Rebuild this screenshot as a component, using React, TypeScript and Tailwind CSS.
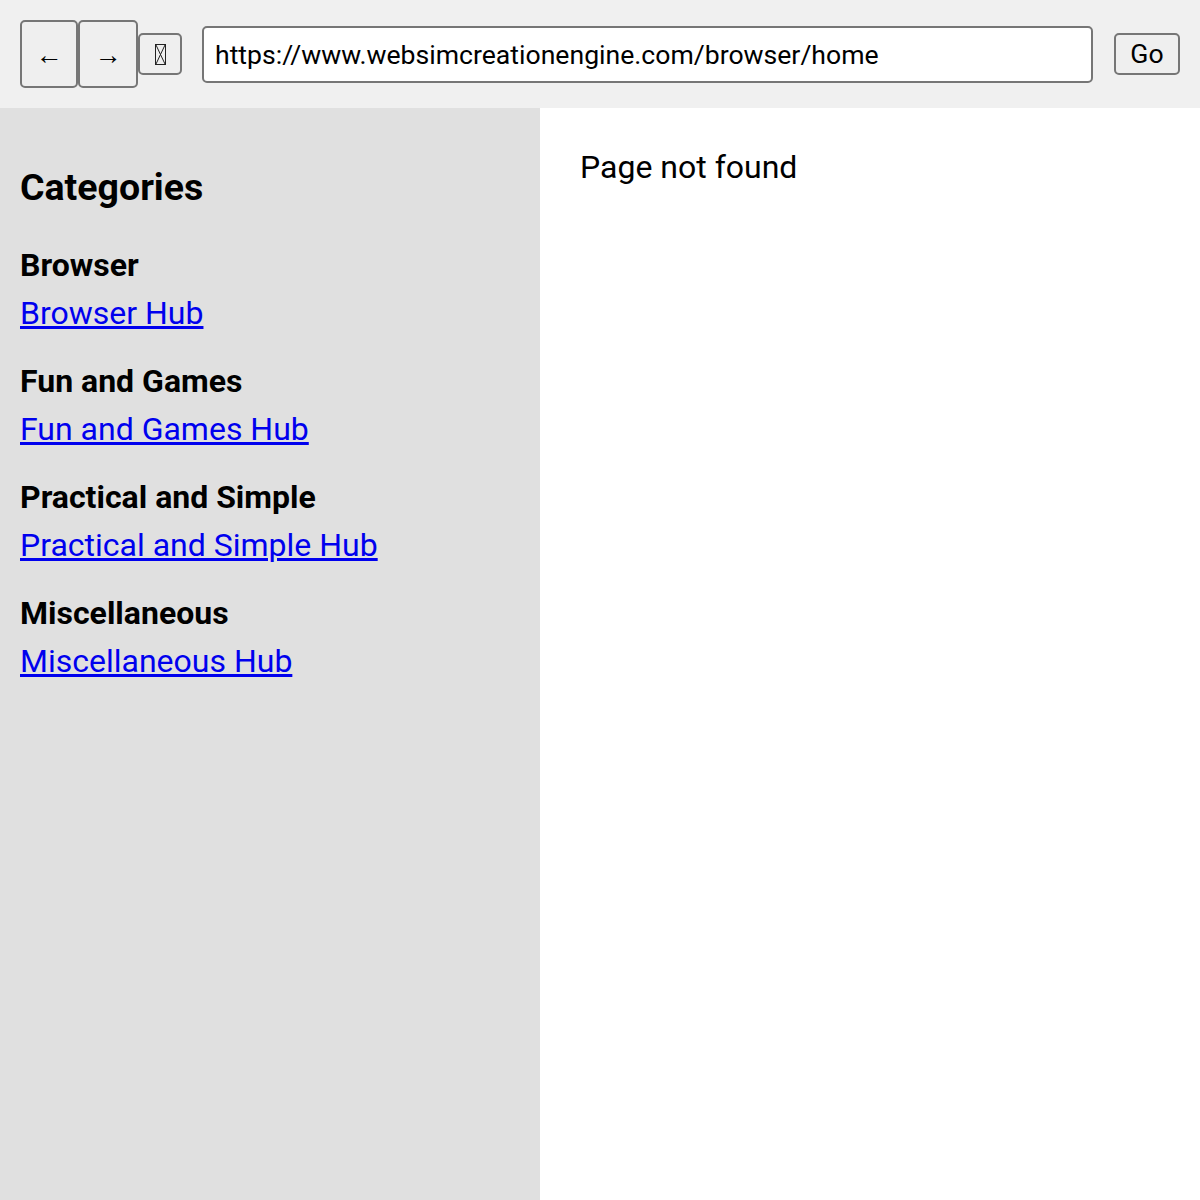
export default function App() {
  const sections = [
    { title: 'Browser', link: 'Browser Hub' },
    { title: 'Fun and Games', link: 'Fun and Games Hub' },
    { title: 'Practical and Simple', link: 'Practical and Simple Hub' },
    { title: 'Miscellaneous', link: 'Miscellaneous Hub' },
  ]

  return (
    <div className="flex h-[1200px] flex-col font-['Roboto',sans-serif] text-black">
      {/* Toolbar */}
      <div className="flex h-[108px] shrink-0 items-center bg-[#f0f0f0] px-5">
        <button className="flex h-[68px] w-[58px] items-center justify-center rounded-[5px] border-2 border-[#767676] bg-[#efefef] pt-[3px] text-[27px]">
          ←
        </button>
        <button className="flex h-[68px] w-[60px] items-center justify-center rounded-[5px] border-2 border-[#767676] bg-[#efefef] pt-[3px] text-[27px]">
          →
        </button>
        <button className="flex h-[42px] w-[44px] items-center justify-center rounded-[5px] border-2 border-[#767676] bg-[#efefef]">
          <svg width="11" height="21" viewBox="0 0 11 21" fill="none" stroke="#222" strokeWidth="1">
            <rect x="0.5" y="0.5" width="10" height="20" />
            <path d="M1 1 L10 20 M10 1 L1 20" />
          </svg>
        </button>
        <input
          readOnly
          value="https://www.websimcreationengine.com/browser/home"
          className="ml-5 h-[57px] flex-1 rounded-[5px] border-2 border-[#767676] bg-white px-[11px] text-[26.6px] outline-none"
        />
        <button className="ml-[21px] flex h-[42px] w-[66px] items-center justify-center rounded-[5px] border-2 border-[#767676] bg-[#efefef] text-[26.6px]">
          Go
        </button>
      </div>

      <div className="flex flex-1">
        {/* Sidebar */}
        <div className="w-[540px] shrink-0 bg-[#e0e0e0] px-5 pt-5">
          <h2 className="mt-[35px] text-[37.5px] font-bold leading-[48px]">Categories</h2>
          {sections.map((s, i) => (
            <div key={s.title} className={i === 0 ? 'mt-[36px]' : 'mt-[32px]'}>
              <h3 className="text-[32px] font-bold leading-[36px]">{s.title}</h3>
              <a href="#" className="mt-[12px] block text-[32px] leading-[36px] text-[#0000ee] underline">
                {s.link}
              </a>
            </div>
          ))}
        </div>

        {/* Content */}
        <div className="flex-1 bg-white pl-10 pt-[41px]">
          <p className="text-[32px] leading-[36px]">Page not found</p>
        </div>
      </div>
    </div>
  )
}
